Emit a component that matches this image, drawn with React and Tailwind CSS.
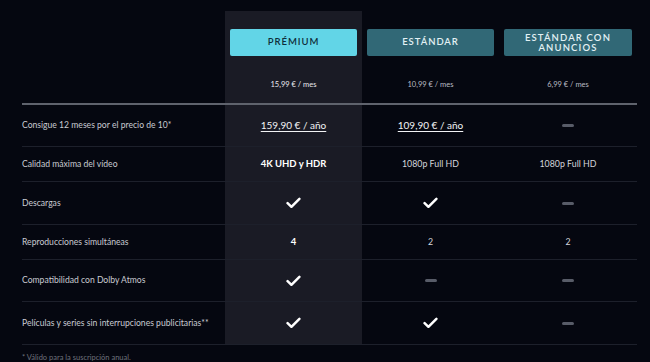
import React from 'react';

const rows = [
  { label: 'Consigue 12 meses por el precio de 10*', h: 'h-[42px]', cells: [{ t: 'price', v: '159,90 € / año' }, { t: 'price', v: '109,90 € / año' }, { t: 'dash' }] },
  { label: 'Calidad máxima del vídeo', h: 'h-[35px]', cells: [{ t: 'text', v: '4K UHD y HDR' }, { t: 'text', v: '1080p Full HD' }, { t: 'text', v: '1080p Full HD' }] },
  { label: 'Descargas', h: 'h-[43px]', cells: [{ t: 'check' }, { t: 'check' }, { t: 'dash' }] },
  { label: 'Reproducciones simultáneas', h: 'h-[35px]', cells: [{ t: 'text', v: '4' }, { t: 'text', v: '2' }, { t: 'text', v: '2' }] },
  { label: 'Compatibilidad con Dolby Atmos', h: 'h-[42px]', cells: [{ t: 'check' }, { t: 'dash' }, { t: 'dash' }] },
  { label: 'Películas y series sin interrupciones publicitarias**', h: 'h-[43px]', cells: [{ t: 'check' }, { t: 'check' }, { t: 'dash' }] },
];

function Check() {
  return (
    <svg width="15" height="12" viewBox="0 0 15 12" fill="none">
      <path d="M1.6 6.2 L5.4 9.8 L13.4 1.8" stroke="#ffffff" strokeWidth="2.5" strokeLinecap="round" strokeLinejoin="round" />
    </svg>
  );
}

function Cell({ cell, premium }) {
  if (cell.t === 'check') return <Check />;
  if (cell.t === 'dash') return <div className="w-[12px] h-[3px] rounded-full bg-[#585c68]" />;
  if (cell.t === 'price')
    return <span className="text-[10px] text-[#f2f3f5] underline underline-offset-2">{cell.v}</span>;
  return (
    <span className={premium ? 'text-[9.5px] font-bold text-white' : 'text-[8.8px] text-[#d4d6dc]'}>{cell.v}</span>
  );
}

export default function App() {
  return (
    <div className="w-[650px] h-[362px] overflow-hidden bg-[#050710] pt-[11px] pl-[22px]" style={{ fontFamily: 'Lato, "Noto Sans", sans-serif' }}>
      <div className="w-[615px]">
        {/* Header */}
        <div className="grid grid-cols-[203px_137px_137px_138px] h-[94px] border-b-2 border-[#5f636d]">
          <div />
          <div className="bg-[#1a1b25] flex flex-col items-center pt-[18px] px-[5px]">
            <div className="w-full h-[27px] rounded-[2px] bg-[#62d5e7] flex items-center justify-center text-[9.5px] font-semibold tracking-[0.1em] text-[#0f2d3a]">
              PRÉMIUM
            </div>
            <div className="mt-[23px] text-[7.5px] text-[#e9eaee]">15,99 € / mes</div>
          </div>
          <div className="flex flex-col items-center pt-[18px] px-[5px]">
            <div className="w-full h-[27px] rounded-[2px] bg-[#316876] flex items-center justify-center text-[9.5px] font-semibold tracking-[0.1em] text-[#e3f1f4]">
              ESTÁNDAR
            </div>
            <div className="mt-[23px] text-[7.5px] text-[#b9bcc4]">10,99 € / mes</div>
          </div>
          <div className="flex flex-col items-center pt-[18px] px-[5px]">
            <div className="w-full h-[27px] rounded-[2px] bg-[#316876] flex flex-col items-center justify-center text-center leading-[10px] text-[9.5px] font-semibold tracking-[0.12em] text-[#e3f1f4]">
              <span>ESTÁNDAR CON</span>
              <span>ANUNCIOS</span>
            </div>
            <div className="mt-[23px] text-[7.5px] text-[#b9bcc4]">6,99 € / mes</div>
          </div>
        </div>

        {/* Rows */}
        {rows.map((r, i) => (
          <div key={i} className={`grid grid-cols-[203px_137px_137px_138px] ${r.h} border-b border-[#1d202b]`}>
            <div className="flex items-center text-[8.6px] text-[#c9cbd2]">{r.label}</div>
            {r.cells.map((c, j) => (
              <div key={j} className={`flex items-center justify-center ${j === 0 ? 'bg-[#1a1b25]' : ''}`}>
                <Cell cell={c} premium={j === 0} />
              </div>
            ))}
          </div>
        ))}

        <div className="pt-[8px] text-[7.5px] leading-[9px] text-[#6e717b]">
          * Válido para la suscripción anual.
        </div>
      </div>
    </div>
  );
}
